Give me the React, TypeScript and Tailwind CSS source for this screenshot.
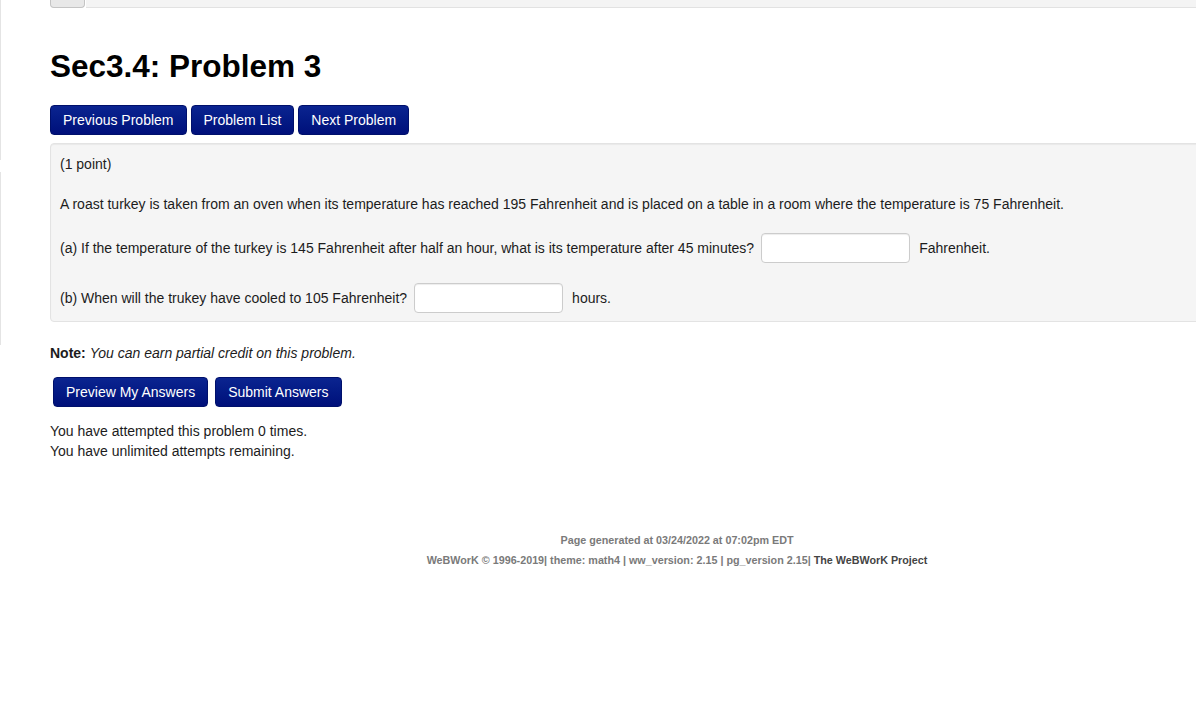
import React from "react";

const NavButton = ({ label }: { label: string }) => (
  <button
    type="button"
    className="h-[30px] px-[12px] rounded-[4px] border border-[#00106b] bg-gradient-to-b from-[#0b2490] to-[#000f7a] text-white text-[14px] leading-none"
  >
    {label}
  </button>
);

const AnswerBox = () => (
  <input
    type="text"
    className="h-[30px] w-[149px] rounded-[4px] border border-[#cccccc] bg-white px-2 shadow-[inset_0_1px_1px_rgba(0,0,0,0.075)] outline-none"
  />
);

export default function App() {
  return (
    <div
      className="relative min-h-[728px] w-[1196px] overflow-hidden bg-white text-[14px] leading-[20px] text-[#1c1c1c]"
      style={{ fontFamily: '"Liberation Sans", Arial, sans-serif' }}
    >
      <div className="flex">
        {/* left sidebar edge */}
        <div className="flex w-[2px] flex-col">
          <div className="h-[160px] border-r border-[#e4e4e4]" />
          <div className="h-[12px]" />
          <div className="h-[173px] border-r border-[#e4e4e4]" />
        </div>

        <div className="ml-[49px] w-[1254px] shrink-0">
          {/* cut-off toolbar */}
          <div className="flex h-[8px]">
            <div className="h-[8px] w-[35px] rounded-b-[4px] border border-t-0 border-[#c4c4c4] bg-[#e8e8e8]" />
            <div className="ml-[1px] h-[8px] flex-1 border-b border-[#e2e2e2] bg-[#f4f4f4]" />
          </div>

          <h1 className="mt-[40px] text-[31.5px] font-bold leading-[36px] text-black">
            Sec3.4: Problem 3
          </h1>

          <div className="mt-[21px] flex gap-[4px]">
            <NavButton label="Previous Problem" />
            <NavButton label="Problem List" />
            <NavButton label="Next Problem" />
          </div>

          <div className="mt-[8px] rounded-[4px] border border-[#e3e3e3] bg-[#f5f5f5] pl-[9px] pr-[9px] pt-[10px] pb-[8px] shadow-[inset_0_1px_1px_rgba(0,0,0,0.05)]">
            <p>(1 point)</p>
            <p className="mt-[20px]">
              A roast turkey is taken from an oven when its temperature has reached 195 Fahrenheit and is placed on a table in a room where the temperature is 75 Fahrenheit.
            </p>
            <div className="mt-[19px] flex items-center">
              <span>(a) If the temperature of the turkey is 145 Fahrenheit after half an hour, what is its temperature after 45 minutes?</span>
              <span className="ml-[7px]">
                <AnswerBox />
              </span>
              <span className="ml-[9px]">Fahrenheit.</span>
            </div>
            <div className="mt-[20px] flex items-center">
              <span>(b) When will the trukey have cooled to 105 Fahrenheit?</span>
              <span className="ml-[7px]">
                <AnswerBox />
              </span>
              <span className="ml-[9px]">hours.</span>
            </div>
          </div>

          <p className="mt-[21px]">
            <b>Note:</b> <i>You can earn partial credit on this problem.</i>
          </p>

          <div className="ml-[3px] mt-[14px] flex gap-[7px]">
            <NavButton label="Preview My Answers" />
            <NavButton label="Submit Answers" />
          </div>

          <div className="mt-[14px]">
            <p>You have attempted this problem 0 times.</p>
            <p>You have unlimited attempts remaining.</p>
          </div>

          <footer className="mt-[69px] text-center text-[10.75px] font-bold leading-[20px] text-[#7a7a7a]">
            <p>Page generated at 03/24/2022 at 07:02pm EDT</p>
            <p>
              WeBWorK © 1996-2019| theme: math4 | ww_version: 2.15 | pg_version 2.15|{" "}
              <span className="text-[#444444]">The WeBWorK Project</span>
            </p>
          </footer>
        </div>
      </div>
    </div>
  );
}
